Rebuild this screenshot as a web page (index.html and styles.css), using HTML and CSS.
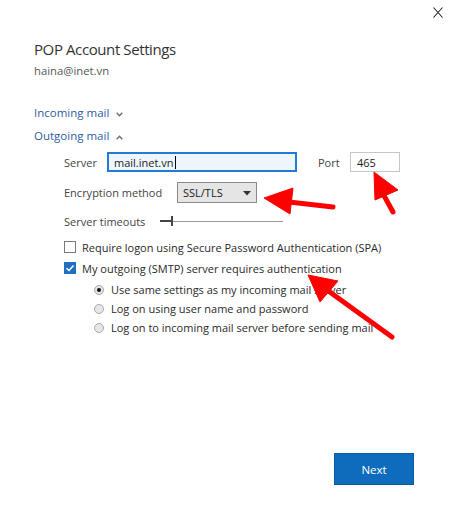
FILE: index.html
```html
<!DOCTYPE html>
<html>
<head>
<meta charset="utf-8">
<title>POP Account Settings</title>
<link rel="stylesheet" href="styles.css">
</head>
<body>
<div class="dialog">
  <div class="titlebar">
    <svg class="close" width="10" height="11" viewBox="0 0 10 11"><path d="M0.5 0.5 L9.5 10.5 M9.5 0.5 L0.5 10.5" stroke="#222" stroke-width="1.1" fill="none"/></svg>
  </div>
  <div class="content">
    <h1 class="title">POP Account Settings</h1>
    <div class="email">haina@inet.vn</div>
    <div class="section-link first">Incoming mail
      <svg class="chev" width="7" height="5" viewBox="0 0 7 5"><path d="M0.7 0.8 L3.5 3.8 L6.3 0.8" stroke="#6d6d6d" stroke-width="1.4" fill="none"/></svg>
    </div>
    <div class="section-link">Outgoing mail
      <svg class="chev" width="7" height="5" viewBox="0 0 7 5"><path d="M0.7 4.2 L3.5 1.2 L6.3 4.2" stroke="#6d6d6d" stroke-width="1.4" fill="none"/></svg>
    </div>
    <div class="outgoing">
      <div class="row row-server">
        <span class="label label-server">Server</span>
        <span class="input input-server">mail.inet.vn<span class="caret"></span></span>
        <span class="label label-port">Port</span>
        <span class="input input-port">465</span>
      </div>
      <div class="row row-enc">
        <span class="label label-enc">Encryption method</span>
        <span class="select">SSL/TLS<svg class="tri" width="8" height="5" viewBox="0 0 8 5"><path d="M0 0 H8 L4 4.5 Z" fill="#333"/></svg></span>
      </div>
      <div class="row row-timeout">
        <span class="label label-timeout">Server timeouts</span>
        <span class="slider"><span class="slider-fill"></span><span class="slider-thumb"></span><span class="slider-track"></span></span>
      </div>
      <div class="check check-first"><span class="box"></span><span>Require logon using Secure Password Authentication (SPA)</span></div>
      <div class="check"><span class="box checked"><svg width="12" height="12" viewBox="0 0 12 12"><path d="M2.5 6.2 L5 8.5 L9.5 3.5" stroke="#fff" stroke-width="1.5" fill="none"/></svg></span><span>My outgoing (SMTP) server requires authentication</span></div>
      <div class="radios">
        <div class="radio-row"><span class="radio on"></span><span>Use same settings as my incoming mail server</span></div>
        <div class="radio-row"><span class="radio"></span><span>Log on using user name and password</span></div>
        <div class="radio-row"><span class="radio"></span><span>Log on to incoming mail server before sending mail</span></div>
      </div>
    </div>
  </div>
  <div class="footer"><button class="next">Next</button></div>
  <svg class="annotations" width="452" height="520" viewBox="0 0 452 520">
    <g fill="#ff0000" stroke="#ff0000" stroke-linejoin="round">
      <line x1="289" y1="202" x2="333" y2="207" stroke-width="5" stroke-linecap="round"/>
      <polygon points="264,198 293,188 290,214" stroke-width="1"/>
      <line x1="382" y1="192" x2="393" y2="212" stroke-width="5" stroke-linecap="round"/>
      <polygon points="374,172 398,190 375,200" stroke-width="1"/>
      <line x1="327" y1="290" x2="392" y2="337" stroke-width="5" stroke-linecap="round"/>
      <polygon points="308,275 338,281 320,302" stroke-width="1"/>
    </g>
  </svg>
</div>
</body>
</html>
```
FILE: styles.css
```css
* { box-sizing: border-box; }
html, body { margin: 0; padding: 0; background: #fff; }
body {
  font-family: "Open Sans", "Noto Sans", sans-serif;
  font-size: 11px;
  color: #333;
}
.dialog {
  position: relative;
  width: 452px;
  height: 520px;
  background: #fff;
  display: flex;
  flex-direction: column;
}
.titlebar {
  display: flex;
  justify-content: flex-end;
  padding: 7px 9px 0 0;
  height: 39px;
}
.close { display: block; }
.content {
  padding-left: 34px;
  display: flex;
  flex-direction: column;
}
.title {
  margin: 0;
  font-weight: normal;
  font-size: 15px;
  line-height: 20px;
  color: #333;
  letter-spacing: -0.4px;
}
.email {
  margin-top: 4px;
  line-height: 16px;
  color: #555;
  font-size: 11.3px;
}
.section-link {
  line-height: 16px;
  color: #2e5d9f;
  margin-top: 7px;
  display: flex;
  align-items: center;
  font-size: 11.5px;
}
.section-link.first { margin-top: 26px; }
.chev { margin-left: 7px; margin-top: 2px; }
.outgoing {
  padding-left: 30px;
  display: flex;
  flex-direction: column;
}
.row { display: flex; align-items: center; }
.label { color: #444; }
.row-server { margin-top: 8px; height: 20px; }
.label-server { width: 43px; }
.input {
  height: 20px;
  display: flex;
  align-items: center;
  color: #222;
}
.input-server {
  width: 190px;
  border: 2px solid #1f7bd4;
  background: #eef6fd;
  padding-left: 5px;
}
.caret {
  display: inline-block;
  width: 1px;
  height: 13px;
  background: #000;
  margin-left: 1px;
}
.label-port { margin-left: 21px; width: 32px; }
.input-port {
  width: 50px;
  border: 1px solid #c6c6c6;
  padding-left: 6px;
}
.row-enc { margin-top: 10px; height: 21px; }
.label-enc { width: 113px; }
.select {
  width: 80px;
  height: 21px;
  border: 1px solid #8a8a8a;
  background: #e5e5e5;
  display: flex;
  align-items: center;
  justify-content: space-between;
  padding: 0 5px 0 5px;
  color: #222;
}
.tri { margin-top: 1px; }
.row-timeout { margin-top: 10px; height: 16px; }
.label-timeout { width: 96px; }
.slider {
  width: 123px;
  height: 12px;
  display: flex;
  align-items: center;
}
.slider-fill { width: 11px; height: 2px; background: #444; }
.slider-thumb { width: 2px; height: 10px; background: #444; }
.slider-track { flex: 1; height: 1px; background: #999; }
.check {
  display: flex;
  align-items: center;
  height: 16px;
  margin-top: 5px;
  color: #2a2a2a;
}
.check-first { margin-top: 10px; }
.box {
  width: 12px;
  height: 12px;
  border: 1px solid #7a7a7a;
  background: #fff;
  margin-right: 6px;
  display: flex;
}
.box.checked {
  background: #1f6fc3;
  border-color: #1f6fc3;
}
.box.checked svg { margin: -1px; }
.radios {
  margin-top: 4px;
  padding-left: 30px;
  display: flex;
  flex-direction: column;
}
.radio-row {
  display: flex;
  align-items: center;
  height: 19px;
  color: #2a2a2a;
}
.radio {
  width: 10px;
  height: 10px;
  border-radius: 50%;
  border: 1px solid #a9a9a9;
  background: #e6e6e6;
  margin-right: 7px;
  display: flex;
  align-items: center;
  justify-content: center;
}
.radio.on::after {
  content: "";
  width: 4px;
  height: 4px;
  border-radius: 50%;
  background: #111;
}
.footer {
  margin-top: auto;
  display: flex;
  justify-content: flex-end;
  padding: 0 38px 35px 0;
}
.next {
  width: 80px;
  height: 32px;
  background: #0f6cbd;
  border: 1px solid #0b5aa2;
  color: #fff;
  font-family: "Open Sans", "Noto Sans", sans-serif;
  font-size: 11.5px;
  padding: 0;
}
.annotations {
  position: absolute;
  left: 0;
  top: 0;
  pointer-events: none;
}
```
